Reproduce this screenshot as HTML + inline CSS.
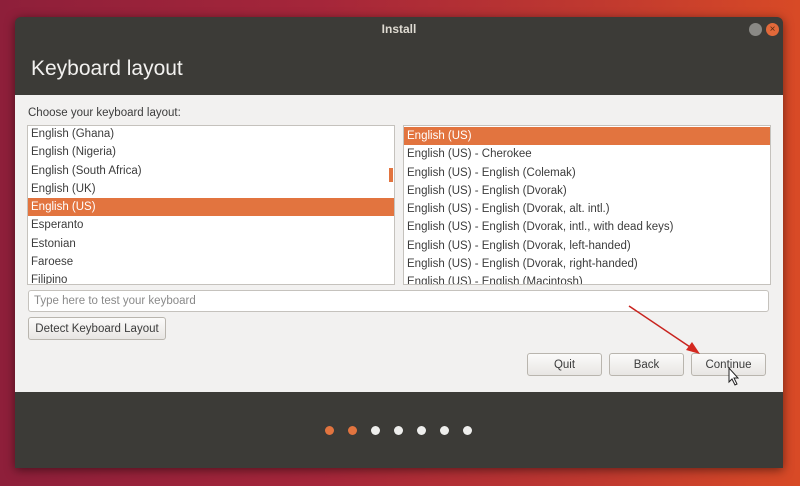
<!DOCTYPE html><html><head><style>
body{margin:0;width:800px;height:486px;overflow:hidden;background:linear-gradient(90deg,#8e1f3a 0%,#a5263a 40%,#c0392f 75%,#d84a26 100%);font-family:"Liberation Sans",sans-serif;position:relative}
.win{position:absolute;left:15px;top:17px;width:768px;height:451px;background:#3c3b37;border-radius:6px 6px 0 0;overflow:hidden;box-shadow:0 2px 10px rgba(0,0,0,.5)}
.title{position:absolute;top:0;left:0;right:0;height:24px;text-align:center;color:#dfdbd2;font-size:12px;font-weight:bold;line-height:24px}
h1{position:absolute;left:16px;top:40px;margin:0;font-weight:normal;color:#f2f1ef;font-size:21px}
.content{position:absolute;left:0;top:78px;width:768px;height:297px;background:#f2f1f0}
.lbl{position:absolute;left:13px;top:12px;font-size:11.5px;color:#3c3c3c}
.list{position:absolute;top:30px;height:158px;background:#fff;border:1px solid #c5c2bd;overflow:hidden;font-size:11.5px;color:#3c3c3c}
.list div{height:18.3px;line-height:18.3px;padding-left:3px;white-space:nowrap}
.sel{background:#e2743f;color:#fff}
.btn{position:absolute;height:21px;border:1px solid #b9b5ae;border-radius:3px;background:linear-gradient(#fbfbfa,#e8e6e3);font-size:11.5px;color:#3c3c3c;text-align:center;line-height:22px}
.dot{position:absolute;top:409px;width:9px;height:9px;border-radius:50%;background:#eeeeec}
</style></head><body>
<div class="win">
<div class="title">Install</div>
<div style="position:absolute;left:734px;top:6px;width:13px;height:13px;border-radius:50%;background:#8a8985"></div>
<div style="position:absolute;left:751px;top:6px;width:13px;height:13px;border-radius:50%;background:#e2693a;color:#5a2a10;font-size:10px;text-align:center;line-height:13px">×</div>
<h1>Keyboard layout</h1>
<div class="content">
<div class="lbl">Choose your keyboard layout:</div>
<div class="list" style="left:12px;width:366px">
<div style="margin-top:-1px">English (Ghana)</div><div>English (Nigeria)</div><div>English (South Africa)</div><div>English (UK)</div><div class="sel">English (US)</div><div>Esperanto</div><div>Estonian</div><div>Faroese</div><div>Filipino</div>
<span style="position:absolute;left:361px;top:42px;width:4px;height:14px;background:#e2743f"></span>
</div>
<div class="list" style="left:388px;width:366px">
<div class="sel" style="margin-top:1px">English (US)</div><div>English (US) - Cherokee</div><div>English (US) - English (Colemak)</div><div>English (US) - English (Dvorak)</div><div>English (US) - English (Dvorak, alt. intl.)</div><div>English (US) - English (Dvorak, intl., with dead keys)</div><div>English (US) - English (Dvorak, left-handed)</div><div>English (US) - English (Dvorak, right-handed)</div><div>English (US) - English (Macintosh)</div>
</div>
<div style="position:absolute;left:13px;top:195px;width:734px;height:20px;border:1px solid #c5c2bd;border-radius:3px;background:#fff;font-size:11.5px;color:#8a8a8a;line-height:20px;padding-left:5px">Type here to test your keyboard</div>
<div class="btn" style="left:13px;top:222px;width:136px">Detect Keyboard Layout</div>
<div class="btn" style="left:512px;top:258px;width:73px">Quit</div>
<div class="btn" style="left:594px;top:258px;width:73px">Back</div>
<div class="btn" style="left:676px;top:258px;width:73px">Continue</div>
</div>
<div class="dot" style="left:310px;background:#e2743f"></div>
<div class="dot" style="left:333px;background:#e2743f"></div>
<div class="dot" style="left:356px"></div>
<div class="dot" style="left:379px"></div>
<div class="dot" style="left:402px"></div>
<div class="dot" style="left:425px"></div>
<div class="dot" style="left:448px"></div>
</div>
<svg style="position:absolute;left:0;top:0" width="800" height="486">
<line x1="629" y1="306" x2="693" y2="349" stroke="#c8231e" stroke-width="1.5"/>
<polygon points="700,354 686,350 692,342" fill="#d42820"/>
<path d="M729,368 L729,382 L732,379 L735,385 L737,384 L734,378 L738,378 Z" fill="#fff" stroke="#222" stroke-width="1"/>
</svg>
</body></html>
